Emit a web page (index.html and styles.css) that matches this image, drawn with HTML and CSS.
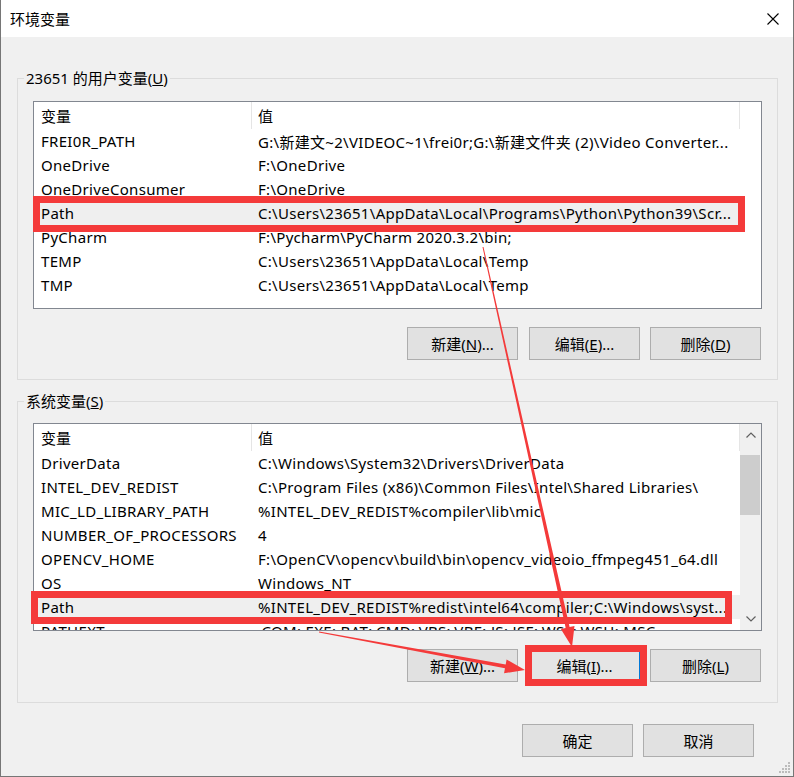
FILE: index.html
```html
<!DOCTYPE html>
<html lang="zh-CN">
<head>
<meta charset="utf-8">
<title>环境变量</title>
<link rel="stylesheet" href="styles.css">
</head>
<body>
<div class="page">
  <div class="window">
    <div class="titlebar">
      <span class="title">环境变量</span>
      <svg class="close" width="12" height="12" viewBox="0 0 12 12"><path d="M0.5 0.5 L11.5 11.5 M11.5 0.5 L0.5 11.5" stroke="#000" stroke-width="1.1" fill="none"/></svg>
    </div>
    <div class="content">
      <fieldset class="group group-user">
        <legend>23651 的用户变量(<u>U</u>)</legend>
        <div class="group-body">
          <div class="list">
            <div class="table">
              <div class="row head"><span class="c1">变量</span><span class="c2">值</span></div>
              <div class="row"><span class="c1">FREI0R_PATH</span><span class="c2">G:\新建文~2\VIDEOC~1\frei0r;G:\新建文件夹 (2)\Video Converter...</span></div>
              <div class="row"><span class="c1">OneDrive</span><span class="c2">F:\OneDrive</span></div>
              <div class="row"><span class="c1">OneDriveConsumer</span><span class="c2">F:\OneDrive</span></div>
              <div class="row sel"><span class="c1">Path</span><span class="c2">C:\Users\23651\AppData\Local\Programs\Python\Python39\Scr...</span></div>
              <div class="row"><span class="c1">PyCharm</span><span class="c2">F:\Pycharm\PyCharm 2020.3.2\bin;</span></div>
              <div class="row"><span class="c1">TEMP</span><span class="c2">C:\Users\23651\AppData\Local\Temp</span></div>
              <div class="row"><span class="c1">TMP</span><span class="c2">C:\Users\23651\AppData\Local\Temp</span></div>
            </div>
          </div>
          <div class="buttons">
            <button class="btn">新建(<u>N</u>)...</button>
            <button class="btn">编辑(<u>E</u>)...</button>
            <button class="btn">删除(<u>D</u>)</button>
          </div>
        </div>
      </fieldset>

      <fieldset class="group group-sys">
        <legend>系统变量(<u>S</u>)</legend>
        <div class="group-body group-body-sys">
          <div class="list">
            <div class="table">
              <div class="row head"><span class="c1">变量</span><span class="c2">值</span></div>
              <div class="row"><span class="c1">DriverData</span><span class="c2">C:\Windows\System32\Drivers\DriverData</span></div>
              <div class="row"><span class="c1">INTEL_DEV_REDIST</span><span class="c2">C:\Program Files (x86)\Common Files\Intel\Shared Libraries\</span></div>
              <div class="row"><span class="c1">MIC_LD_LIBRARY_PATH</span><span class="c2">%INTEL_DEV_REDIST%compiler\lib\mic</span></div>
              <div class="row"><span class="c1">NUMBER_OF_PROCESSORS</span><span class="c2">4</span></div>
              <div class="row"><span class="c1">OPENCV_HOME</span><span class="c2">F:\OpenCV\opencv\build\bin\opencv_videoio_ffmpeg451_64.dll</span></div>
              <div class="row"><span class="c1">OS</span><span class="c2">Windows_NT</span></div>
              <div class="row sel"><span class="c1">Path</span><span class="c2">%INTEL_DEV_REDIST%redist\intel64\compiler;C:\Windows\syst...</span></div>
              <div class="row"><span class="c1">PATHEXT</span><span class="c2">.COM;.EXE;.BAT;.CMD;.VBS;.VBE;.JS;.JSE;.WSF;.WSH;.MSC</span></div>
            </div>
            <div class="scrollbar">
              <div class="sb-btn"><svg width="10" height="6" viewBox="0 0 10 6"><path d="M0.5 5.5 L5 1 L9.5 5.5" stroke="#606060" stroke-width="1.2" fill="none"/></svg></div>
              <div class="sb-track"><div class="sb-thumb"></div></div>
              <div class="sb-btn"><svg width="10" height="6" viewBox="0 0 10 6"><path d="M0.5 0.5 L5 5 L9.5 0.5" stroke="#606060" stroke-width="1.2" fill="none"/></svg></div>
            </div>
          </div>
          <div class="buttons">
            <button class="btn">新建(<u>W</u>)...</button>
            <button class="btn btn-default">编辑(<u>I</u>)...</button>
            <button class="btn">删除(<u>L</u>)</button>
          </div>
        </div>
      </fieldset>

      <div class="footer">
        <button class="btn">确定</button>
        <button class="btn">取消</button>
      </div>
    </div>
  </div>

  <div class="mark mark-user"></div>
  <div class="mark mark-sys"></div>
  <div class="mark mark-btn"></div>

  <svg class="arrows" width="794" height="777" viewBox="0 0 794 777">
    <polygon fill="#f43a3a" points="482.51,247.11 565.71,627.91 560.83,629.00 572,647 574.49,625.96 569.61,627.05 483.49,246.89"/>
    <polygon fill="#f43a3a" points="319.09,631.51 505.69,664.40 506.60,659.49 525,670 504.06,673.25 504.97,668.34 318.91,632.49"/>
  </svg>

  <svg class="grip" width="12" height="12" viewBox="0 0 12 12">
    <rect x="9" y="0" width="2" height="2" fill="#bcbcbc"/>
    <rect x="6" y="3" width="2" height="2" fill="#bcbcbc"/>
    <rect x="9" y="3" width="2" height="2" fill="#bcbcbc"/>
    <rect x="3" y="6" width="2" height="2" fill="#bcbcbc"/>
    <rect x="6" y="6" width="2" height="2" fill="#bcbcbc"/>
    <rect x="9" y="6" width="2" height="2" fill="#bcbcbc"/>
    <rect x="0" y="9" width="2" height="2" fill="#bcbcbc"/>
    <rect x="3" y="9" width="2" height="2" fill="#bcbcbc"/>
    <rect x="6" y="9" width="2" height="2" fill="#bcbcbc"/>
    <rect x="9" y="9" width="2" height="2" fill="#bcbcbc"/>
  </svg>
</div>
</body>
</html>
```
FILE: styles.css
```css
html, body {
  margin: 0;
  padding: 0;
  background: #ffffff;
}

body {
  font-family: "Noto Sans", "Noto Sans CJK SC", sans-serif;
  font-size: 15px;
  color: #000;
}

.page {
  position: relative;
  width: 794px;
  height: 777px;
  overflow: hidden;
}

.window {
  box-sizing: border-box;
  width: 794px;
  height: 777px;
  border: 1px solid #767676;
  border-top: none;
  background: #f0f0f0;
}

.titlebar {
  height: 37px;
  background: #fff;
  display: flex;
  align-items: center;
  justify-content: space-between;
  padding: 0 14px 0 9px;
}

.title {
  font-family: "Noto Sans CJK SC", sans-serif;
  font-size: 15px;
  line-height: 20px;
  margin-top: 1px;
}

.close {
  display: block;
}

.content {
  padding: 0 15px 0 16px;
}

.group {
  margin: 0;
  padding: 0;
  border: 1px solid #dcdcdc;
  min-width: 0;
}

.group legend {
  margin-left: 6px;
  padding: 0 2px;
  line-height: 19px;
  font-size: 15px;
}

.group-user {
  margin-top: 32px;
}

.group-sys {
  margin-top: 12px;
}

.group-body {
  padding: 13px 15px 19px;
}

.group-body-sys {
  padding-top: 12px;
  padding-bottom: 20px;
}

.list {
  box-sizing: border-box;
  height: 208px;
  border: 1px solid #828790;
  background: #fff;
  overflow: hidden;
  display: flex;
}

.table {
  width: 706px;
  flex: none;
}

.row {
  display: flex;
  height: 24px;
  align-items: center;
  white-space: nowrap;
  letter-spacing: 0.3px;
}

.row.head {
  height: 27px;
  align-items: stretch;
  letter-spacing: 0;
}

.row.head span {
  display: flex;
  align-items: center;
}

.c1,
.c2 {
  box-sizing: border-box;
  overflow: hidden;
  white-space: nowrap;
}

.c1 {
  width: 218px;
  padding-left: 7px;
}

.c2 {
  width: 488px;
  padding-left: 6px;
}

.head .c1,
.head .c2 {
  border-right: 1px solid #e5e5e5;
}

.row.sel {
  background: #efefef;
}

.scrollbar {
  width: 21px;
  flex: none;
  background: #f0f0f0;
  display: flex;
  flex-direction: column;
}

.sb-btn {
  height: 22px;
  display: flex;
  align-items: center;
  justify-content: center;
  flex: none;
}

.sb-btn svg {
  display: block;
}

.sb-track {
  flex: 1;
}

.sb-thumb {
  height: 60px;
  margin: 9px 1px 0 0;
  background: #cdcdcd;
}

.buttons {
  display: flex;
  justify-content: flex-end;
  gap: 10px;
  margin-top: 18px;
  padding-right: 1px;
}

.buttons .btn:first-child {
  margin-right: 1px;
}

.btn {
  box-sizing: border-box;
  width: 111px;
  height: 33px;
  background: #e1e1e1;
  border: 1px solid #adadad;
  font-family: "Noto Sans", "Noto Sans CJK SC", sans-serif;
  font-size: 15px;
  color: #000;
  padding: 0;
  margin: 0;
}

.btn-default {
  border-color: #0078d7;
  background: #e5e5e5;
}

.footer {
  display: flex;
  justify-content: flex-end;
  gap: 10px;
  margin-top: 21px;
  padding-right: 24px;
}

.mark {
  position: absolute;
  box-sizing: border-box;
  border: 7px solid #f43a3a;
}

.mark-user {
  left: 33px;
  top: 196px;
  width: 712px;
  height: 36px;
}

.mark-sys {
  left: 31px;
  top: 591px;
  width: 701px;
  height: 33px;
}

.mark-btn {
  left: 525px;
  top: 645px;
  width: 122px;
  height: 41px;
}

.arrows {
  position: absolute;
  left: 0;
  top: 0;
  pointer-events: none;
}

.grip {
  position: absolute;
  left: 779px;
  top: 762px;
}
```
